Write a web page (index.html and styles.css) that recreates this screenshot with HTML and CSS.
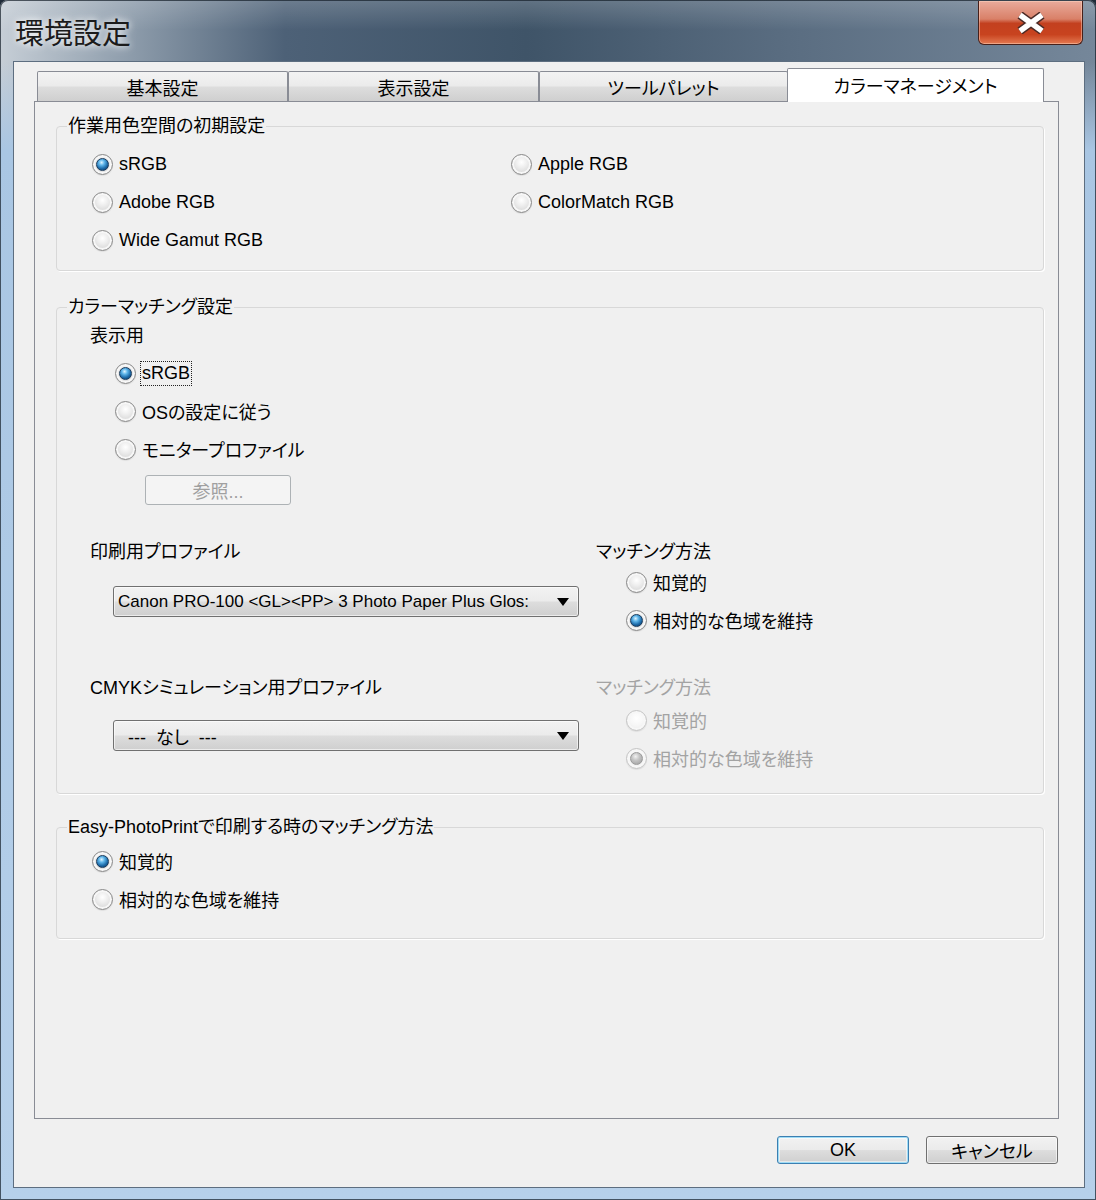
FILE: index.html
```html
<!DOCTYPE html>
<html lang="ja">
<head>
<meta charset="UTF-8" />
<meta name="viewport" content="width=device-width, initial-scale=1" />
<title>環境設定</title>
<link rel="stylesheet" href="styles.css">
</head>
<body>

<div class="window">
  <div class="titlebar">
    <span class="title">環境設定</span>
    <button class="close" aria-label="閉じる">
      <svg width="32" height="22" viewBox="0 0 32 22">
        <path d="M5 3 L27 19 M27 3 L5 19" stroke="#4b2b27" stroke-width="8.5" />
        <path d="M5 3 L27 19 M27 3 L5 19" stroke="#ffffff" stroke-width="5.5" />
      </svg>
    </button>
  </div>

  <div class="client">
    <div class="tabs">
      <div class="tab t1">基本設定</div>
      <div class="tab t2">表示設定</div>
      <div class="tab t3">ツールパレット</div>
      <div class="tab active">カラーマネージメント</div>
    </div>

    <div class="panel">
      <!-- working colour space -->
      <fieldset class="group g1">
        <legend>作業用色空間の初期設定</legend>
        <div class="space-grid">
          <div class="opt"><span class="radio on"></span>sRGB</div>
          <div class="opt"><span class="radio"></span>Apple RGB</div>
          <div class="opt"><span class="radio"></span>Adobe RGB</div>
          <div class="opt"><span class="radio"></span>ColorMatch RGB</div>
          <div class="opt"><span class="radio"></span>Wide Gamut RGB</div>
        </div>
      </fieldset>

      <!-- colour matching -->
      <fieldset class="group g2">
        <legend>カラーマッチング設定</legend>
        <div class="sub-title">表示用</div>
        <div class="display-opts">
          <div class="opt"><span class="radio on"></span><span class="focus">sRGB</span></div>
          <div class="opt"><span class="radio"></span>OSの設定に従う</div>
          <div class="opt"><span class="radio"></span>モニタープロファイル</div>
        </div>
        <button class="btn browse" disabled>参照...</button>

        <div class="profiles">
          <div class="cell">
            <div class="field-label">印刷用プロファイル</div>
            <div class="combo print">
              <span class="combo-text">Canon PRO-100 &lt;GL&gt;&lt;PP&gt; 3 Photo Paper Plus Glos:</span>
              <span class="arrow"></span>
            </div>
          </div>
          <div class="cell">
            <div class="field-label">マッチング方法</div>
            <div class="match-opts first">
              <div class="opt"><span class="radio"></span>知覚的</div>
              <div class="opt"><span class="radio on"></span>相対的な色域を維持</div>
            </div>
          </div>
          <div class="cell">
            <div class="field-label">CMYKシミュレーション用プロファイル</div>
            <div class="combo cmyk">
              <span class="combo-text">  ---  なし  ---</span>
              <span class="arrow"></span>
            </div>
          </div>
          <div class="cell disabled">
            <div class="field-label">マッチング方法</div>
            <div class="match-opts second">
              <div class="opt"><span class="radio dis"></span>知覚的</div>
              <div class="opt"><span class="radio dis on"></span>相対的な色域を維持</div>
            </div>
          </div>
        </div>
      </fieldset>

      <!-- Easy-PhotoPrint -->
      <fieldset class="group g3">
        <legend>Easy-PhotoPrintで印刷する時のマッチング方法</legend>
        <div class="epp-opts">
          <div class="opt"><span class="radio on"></span>知覚的</div>
          <div class="opt"><span class="radio"></span>相対的な色域を維持</div>
        </div>
      </fieldset>
    </div>

    <div class="buttons">
      <button class="btn default">OK</button>
      <button class="btn">キャンセル</button>
    </div>
  </div>
</div>

</body>
</html>
```

FILE: styles.css
```css
body {
  margin: 0;
  background: #1f2b38;
  font-family: "Liberation Sans", "Noto Sans CJK JP", sans-serif;
  font-size: 18px;
  font-feature-settings: "palt";
  color: #000;
}
.window {
  width: 1096px;
  height: 1200px;
  box-sizing: border-box;
  padding: 0 11px 12px 13px;
  display: flex;
  flex-direction: column;
  border-radius: 8px 8px 0 0;
  background:
    linear-gradient(180deg, rgba(176, 204, 232, 0) 0, rgba(176, 204, 232, 0) 62px, #a9c6e3 150px, #b6d0ea 100%),
    linear-gradient(180deg, rgba(255, 255, 255, 0.18) 0, rgba(255, 255, 255, 0) 30px),
    linear-gradient(90deg, #c6ced6 0, #96a4b2 10%, #4d6177 26%, #3f5468 48%, #5a6d81 72%, #75879a 100%);
  box-shadow: inset 0 0 0 1px rgba(20, 30, 40, 0.7);
}
.titlebar {
  height: 61px;
  display: flex;
  align-items: center;
  flex: none;
}
.title {
  margin-left: 2px;
  font-family: "Noto Sans CJK JP", sans-serif;
  font-size: 29px;
  color: #1b1b1b;
  text-shadow: 0 0 6px rgba(255, 255, 255, 0.9), 0 0 12px rgba(255, 255, 255, 0.6);
}
.close {
  margin-left: auto;
  margin-right: 2px;
  align-self: flex-start;
  margin-top: 1px;
  width: 105px;
  height: 44px;
  padding: 0;
  display: flex;
  align-items: center;
  justify-content: center;
  border: 1px solid #47201a;
  border-top: none;
  border-radius: 0 0 6px 6px;
  background: linear-gradient(180deg, #e9ab9c 0, #d98068 42%, #c3401f 52%, #c8431f 78%, #e47a52 100%);
  box-shadow: inset 0 0 0 1px rgba(255, 220, 200, 0.45);
}
.client {
  flex: 1;
  border: 1px solid #5d6e80;
  background: #f0f0f0;
  padding: 6px 25px 0 20px;
  display: flex;
  flex-direction: column;
}

/* tabs */
.tabs {
  display: flex;
  align-items: flex-end;
  height: 33px;
  margin-left: 3px;
}
.tab {
  box-sizing: border-box;
  height: 30px;
  display: flex;
  align-items: center;
  justify-content: center;
  border: 1px solid #898c95;
  border-bottom: none;
  border-radius: 2px 2px 0 0;
  background: linear-gradient(180deg, #f3f3f3 0, #ebebeb 48%, #dddddd 52%, #cfcfcf 100%);
}
.t1, .t2 {
  width: 251px;
}
.t3 {
  width: 249px;
}
.tab.active {
  width: 257px;
  height: 34px;
  margin-left: -1px;
  margin-bottom: -1px;
  padding-bottom: 2px;
  background: #fff;
  position: relative;
  z-index: 1;
}
.panel {
  box-sizing: border-box;
  height: 1018px;
  border: 1px solid #898c95;
  background: #f0f0f0;
  padding: 14px 14px 0 21px;
}

/* group boxes */
.group {
  margin: 0;
  border: 1px solid #d8d8d8;
  border-radius: 4px;
  box-shadow: 1px 1px 0 #ffffff;
  padding: 0 0 0 10px;
  min-inline-size: 0;
}
.group legend {
  padding: 0 1px;
  line-height: 20px;
}
.g1 {
  padding-top: 9px;
  padding-bottom: 11px;
}
.g2 {
  margin-top: 26px;
  padding-bottom: 16px;
}
.g3 {
  margin-top: 23px;
  padding-top: 5px;
  padding-bottom: 20px;
}
.opt {
  height: 38px;
  display: flex;
  align-items: center;
  gap: 6px;
  white-space: nowrap;
}
.radio {
  box-sizing: border-box;
  width: 21px;
  height: 21px;
  flex: none;
  border-radius: 50%;
  border: 1px solid #8a8a8a;
  background: radial-gradient(circle at 50% 38%, #ffffff 0, #eeeeee 35%, #cacaca 100%);
  box-shadow: inset 0 0 0 2px #f7f7f7, 0 1px 1px rgba(0, 0, 0, 0.08);
  display: flex;
  align-items: center;
  justify-content: center;
}
.radio.on::after {
  content: "";
  width: 11px;
  height: 11px;
  border-radius: 50%;
  border: 1px solid #1a3b5c;
  background: radial-gradient(circle at 42% 32%, #dff4ff 0, #5fb6ea 28%, #1c6aa8 62%, #0b2f58 100%);
}
.radio.dis {
  border-color: #c4c4c4;
  background: radial-gradient(circle at 50% 38%, #ffffff 0, #f6f6f6 50%, #e6e6e6 100%);
}
.radio.dis.on::after {
  border-color: #9a9a9a;
  background: radial-gradient(circle at 42% 32%, #f2f2f2 0, #c4c4c4 40%, #9b9b9b 100%);
}

.space-grid {
  display: grid;
  grid-template-columns: 419px 1fr;
  margin-left: 25px;
}
.sub-title {
  margin: 9px 0 0 23px;
  line-height: 20px;
}
.display-opts {
  margin: 8px 0 0 48px;
}
.focus {
  outline: 1px dotted #222;
  outline-offset: 1px;
}
.btn {
  box-sizing: border-box;
  width: 132px;
  height: 28px;
  padding: 0;
  font-family: inherit;
  font-size: 18px;
  font-feature-settings: "palt";
  color: #000;
  border: 1px solid #707070;
  border-radius: 3px;
  background: linear-gradient(180deg, #f2f2f2 0, #ebebeb 48%, #dddddd 52%, #cfcfcf 100%);
  box-shadow: inset 0 0 0 1px rgba(255, 255, 255, 0.6);
}
.btn.browse {
  display: block;
  width: 146px;
  height: 30px;
  margin: 7px 0 0 78px;
  color: #a0a0a0;
  border-color: #adb2b5;
  background: #f4f4f4;
  box-shadow: none;
}
.profiles {
  display: grid;
  grid-template-columns: 506px 1fr;
  row-gap: 39px;
  margin: 37px 0 0 23px;
}
.field-label {
  line-height: 20px;
  white-space: nowrap;
}
.combo {
  box-sizing: border-box;
  width: 466px;
  height: 31px;
  margin-left: 23px;
  display: flex;
  align-items: center;
  padding: 0 9px 0 4px;
  border: 1px solid #707070;
  border-radius: 3px;
  background: linear-gradient(180deg, #f2f2f2 0, #ebebeb 48%, #dddddd 52%, #cfcfcf 100%);
  box-shadow: inset 0 0 0 1px rgba(255, 255, 255, 0.6);
}
.combo.print {
  margin-top: 24px;
}
.combo.cmyk {
  margin-top: 22px;
}
.combo-text {
  flex: 1;
  white-space: pre;
  font-size: 17px;
}
.cmyk .combo-text {
  font-size: 18px;
}
.arrow {
  width: 0;
  height: 0;
  border-left: 6px solid transparent;
  border-right: 6px solid transparent;
  border-top: 8px solid #000;
}
.match-opts {
  margin-left: 30px;
}
.match-opts.first {
  margin-top: 1px;
}
.match-opts.second {
  margin-top: 3px;
}
.cell.disabled {
  color: #a3a3a3;
}
.epp-opts {
  margin-left: 25px;
}

/* dialog buttons */
.buttons {
  display: flex;
  justify-content: flex-end;
  gap: 17px;
  margin: 17px 1px 0 0;
}
.btn.default {
  border-color: #3c7fb1;
  box-shadow: inset 0 0 0 1px #9fdcf6, inset 0 0 0 2px rgba(255, 255, 255, 0.5);
}
```
